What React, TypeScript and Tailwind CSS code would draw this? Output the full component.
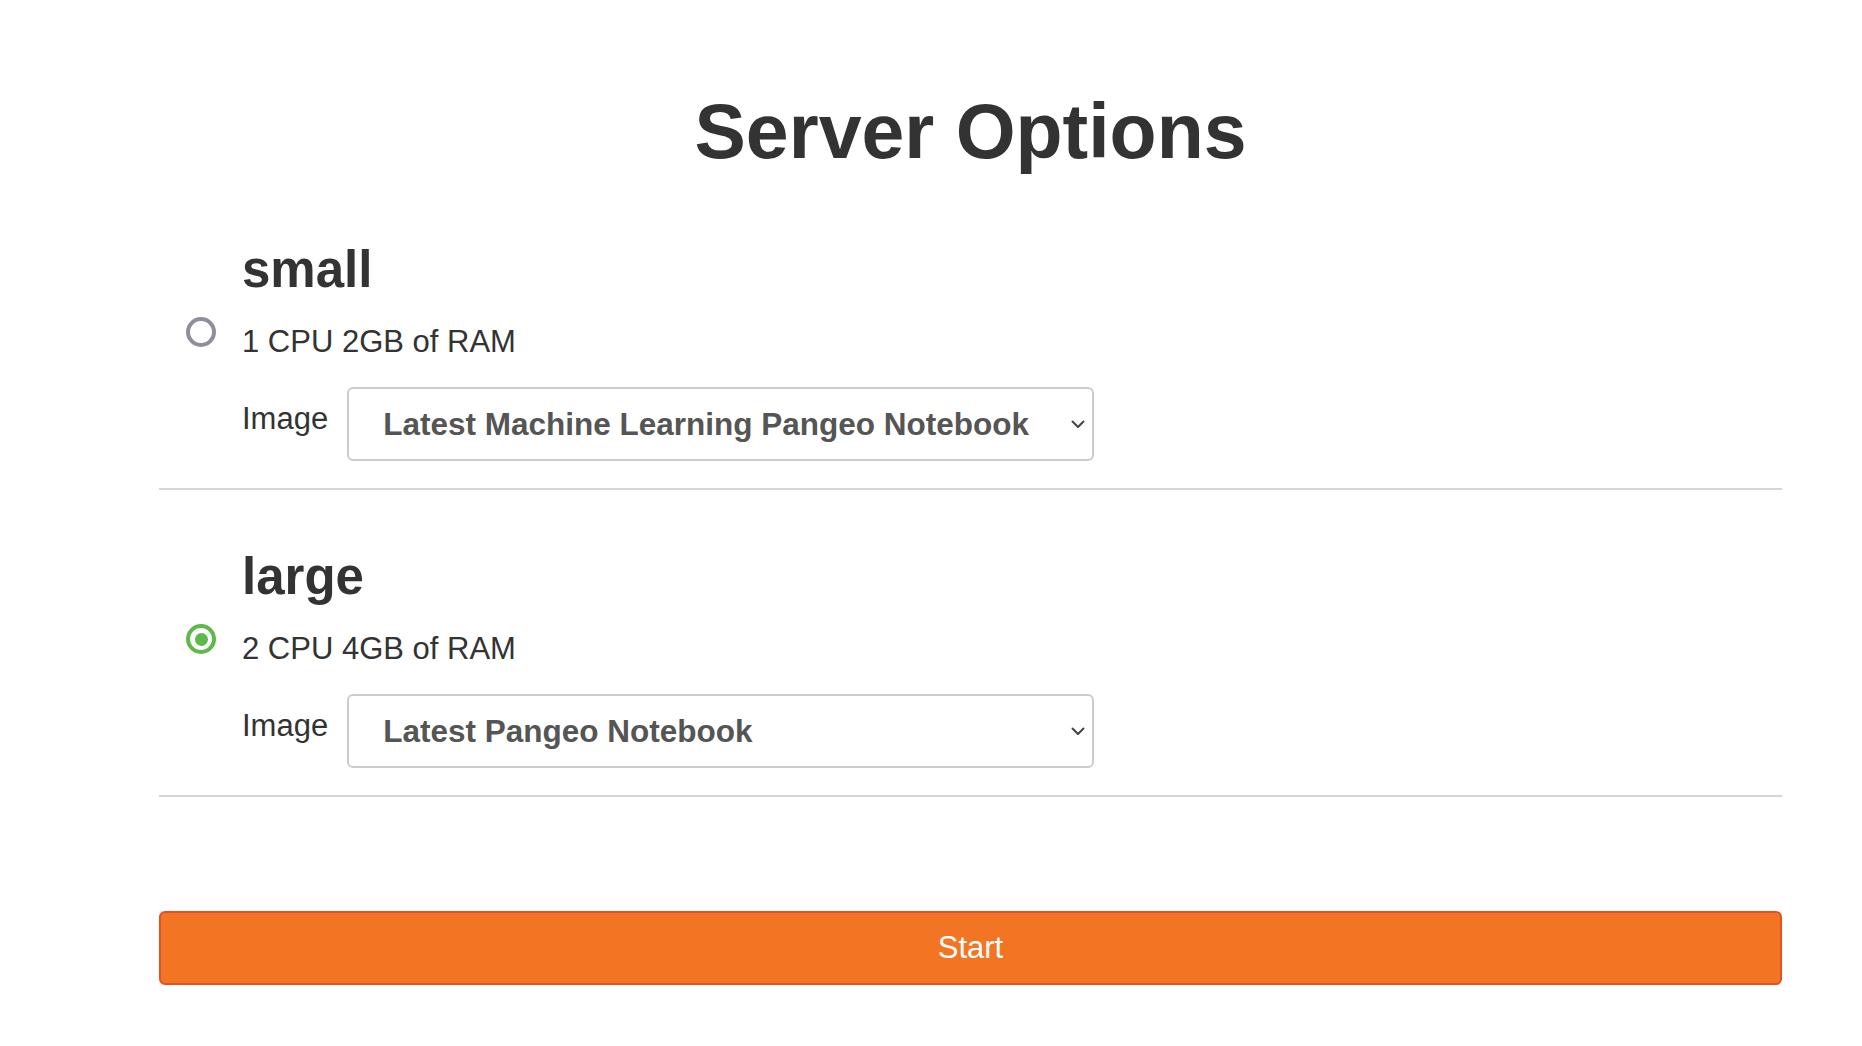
const profiles = [
  { id: "small", title: "small", desc: "1 CPU 2GB of RAM", image: "Latest Machine Learning Pangeo Notebook", checked: false },
  { id: "large", title: "large", desc: "2 CPU 4GB of RAM", image: "Latest Pangeo Notebook", checked: true },
];

function Radio({ checked }: { checked: boolean }) {
  if (checked) {
    return (
      <div className="mt-[75px] flex h-[30px] w-[30px] shrink-0 items-center justify-center rounded-full border-[4px] border-[#5db94a]">
        <div className="h-[13px] w-[13px] rounded-full bg-[#5db94a]" />
      </div>
    );
  }
  return <div className="mt-[75px] h-[30px] w-[30px] shrink-0 rounded-full border-[4px] border-[#8f8e9c]" />;
}

function ImageSelect({ value }: { value: string }) {
  return (
    <div className="flex h-[74px] w-[747px] items-center justify-between rounded-[6px] border-2 border-[#cccccc] bg-white pl-[34px] pr-[7px]">
      <span className="text-[31.5px] font-bold leading-[34px] text-[#555555]">{value}</span>
      <svg width="14" height="9" viewBox="0 0 14 9" fill="none">
        <polyline points="1.5,1.5 7,7 12.5,1.5" stroke="#444444" strokeWidth="2" strokeLinecap="round" strokeLinejoin="round" />
      </svg>
    </div>
  );
}

export default function App() {
  return (
    <div className="min-h-screen bg-white font-['Liberation_Sans',Arial,sans-serif] text-[#333333]">
      <div className="ml-[159px] w-[1623px] pt-[89px]">
        <h1 className="text-center text-[77px] font-bold leading-[85px]">Server Options</h1>

        {profiles.map((p, i) => (
          <div key={p.id}>
            <label className={`flex gap-[26px] pl-[27px] ${i === 0 ? "mt-[68px]" : "mt-[59px]"}`}>
              <Radio checked={p.checked} />
              <div className="flex flex-col">
                <h3 className="text-[51px] font-bold leading-[56px]">{p.title}</h3>
                <p className="mt-[27px] text-[31px] leading-[34px]">{p.desc}</p>
                <div className="mt-[28px] flex items-start gap-[19px]">
                  <span className="mt-[15px] text-[31px] leading-[34px]">Image</span>
                  <ImageSelect value={p.image} />
                </div>
              </div>
            </label>
            <div className="mt-[27px] h-[2px] bg-[#d5d5d5]" />
          </div>
        ))}

        <button className="mt-[114px] flex h-[74px] w-full items-center justify-center rounded-[6px] border-2 border-[#e2511f] bg-[#f37524] text-[31px] leading-[34px] text-white">
          Start
        </button>
      </div>
    </div>
  );
}
